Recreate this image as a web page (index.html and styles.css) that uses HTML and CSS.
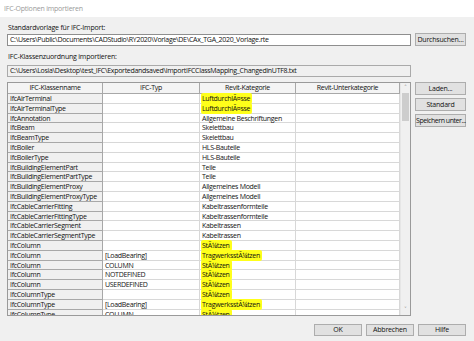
FILE: index.html
```html
<!DOCTYPE html>
<html>
<head>
<meta charset="utf-8">
<link rel="stylesheet" href="styles.css">
</head>
<body>
<div class="titlebar">IFC-Optionen importieren</div>
<div class="content">
  <div class="label l1">Standardvorlage für IFC-Import:</div>
  <div class="inrow">
    <div class="input">C:\Users\Public\Documents\CADStudio\RY2020\Vorlage\DE\CAx_TGA_2020_Vorlage.rte</div>
    <div class="btn side">Durchsuchen...</div>
  </div>
  <div class="label l2">IFC-Klassenzuordnung importieren:</div>
  <div class="inrow">
    <div class="input ro">C:\Users\Losia\Desktop\test_IFC\Exportedandsaved\importIFCClassMapping_ChangedinUTF8.txt</div>
  </div>
  <div class="main">
    <div class="tablebox">
      <div class="grid">
        <div class="hd">IFC-Klassenname</div><div class="hd">IFC-Typ</div><div class="hd">Revit-Kategorie</div><div class="hd">Revit-Unterkategorie</div>
        <div class="c1">IfcAirTerminal</div><div class="c"></div><div class="c"><span class="hl">LuftdurchlÃ¤sse</span></div><div class="c"></div>
        <div class="c1">IfcAirTerminalType</div><div class="c"></div><div class="c"><span class="hl">LuftdurchlÃ¤sse</span></div><div class="c"></div>
        <div class="c1">IfcAnnotation</div><div class="c"></div><div class="c">Allgemeine Beschriftungen</div><div class="c"></div>
        <div class="c1">IfcBeam</div><div class="c"></div><div class="c">Skelettbau</div><div class="c"></div>
        <div class="c1">IfcBeamType</div><div class="c"></div><div class="c">Skelettbau</div><div class="c"></div>
        <div class="c1">IfcBoiler</div><div class="c"></div><div class="c">HLS-Bauteile</div><div class="c"></div>
        <div class="c1">IfcBoilerType</div><div class="c"></div><div class="c">HLS-Bauteile</div><div class="c"></div>
        <div class="c1">IfcBuildingElementPart</div><div class="c"></div><div class="c">Teile</div><div class="c"></div>
        <div class="c1">IfcBuildingElementPartType</div><div class="c"></div><div class="c">Teile</div><div class="c"></div>
        <div class="c1">IfcBuildingElementProxy</div><div class="c"></div><div class="c">Allgemeines Modell</div><div class="c"></div>
        <div class="c1">IfcBuildingElementProxyType</div><div class="c"></div><div class="c">Allgemeines Modell</div><div class="c"></div>
        <div class="c1">IfcCableCarrierFitting</div><div class="c"></div><div class="c">Kabeltrassenformteile</div><div class="c"></div>
        <div class="c1">IfcCableCarrierFittingType</div><div class="c"></div><div class="c">Kabeltrassenformteile</div><div class="c"></div>
        <div class="c1">IfcCableCarrierSegment</div><div class="c"></div><div class="c">Kabeltrassen</div><div class="c"></div>
        <div class="c1">IfcCableCarrierSegmentType</div><div class="c"></div><div class="c">Kabeltrassen</div><div class="c"></div>
        <div class="c1">IfcColumn</div><div class="c"></div><div class="c"><span class="hl">StÃ¼tzen</span></div><div class="c"></div>
        <div class="c1">IfcColumn</div><div class="c">[LoadBearing]</div><div class="c"><span class="hl">TragwerksstÃ¼tzen</span></div><div class="c"></div>
        <div class="c1">IfcColumn</div><div class="c">COLUMN</div><div class="c"><span class="hl">StÃ¼tzen</span></div><div class="c"></div>
        <div class="c1">IfcColumn</div><div class="c">NOTDEFINED</div><div class="c"><span class="hl">StÃ¼tzen</span></div><div class="c"></div>
        <div class="c1">IfcColumn</div><div class="c">USERDEFINED</div><div class="c"><span class="hl">StÃ¼tzen</span></div><div class="c"></div>
        <div class="c1">IfcColumnType</div><div class="c"></div><div class="c"><span class="hl">StÃ¼tzen</span></div><div class="c"></div>
        <div class="c1">IfcColumnType</div><div class="c">[LoadBearing]</div><div class="c"><span class="hl">TragwerksstÃ¼tzen</span></div><div class="c"></div>
        <div class="c1">IfcColumnType</div><div class="c">COLUMN</div><div class="c"><span class="hl">StÃ¼tzen</span></div><div class="c"></div>
      </div>
      <div class="scroll">
        <div class="arrow">&#x2C4;</div>
        <div class="track"><div class="thumb"></div></div>
        <div class="arrow">&#x2C5;</div>
      </div>
    </div>
    <div class="sidebtns">
      <div class="btn side">Laden...</div>
      <div class="btn side">Standard</div>
      <div class="btn side tight">Speichern unter...</div>
    </div>
  </div>
  <div class="footer">
    <div class="btn foot">OK</div>
    <div class="btn foot">Abbrechen</div>
    <div class="btn foot">Hilfe</div>
  </div>
</div>
</body>
</html>
```
FILE: styles.css
```css
* { box-sizing: border-box; }
html, body { margin: 0; padding: 0; }
body {
  width: 474px;
  height: 341px;
  background: #f0f0f0;
  font-family: "Open Sans", "Noto Sans", sans-serif;
  font-size: 7px;
  color: #111;
  overflow: hidden;
}
.titlebar {
  height: 17px;
  background: #fff;
  color: #9a9a9a;
  padding-left: 4px;
  line-height: 17px;
  letter-spacing: -0.2px;
}
.content { padding: 0 8px 0 7px; }
.label { height: 10px; line-height: 10px; padding-left: 1px; letter-spacing: -0.2px; }
.l1 { margin-top: 6px; margin-bottom: 0; }
.l2 { margin-top: 6px; margin-bottom: 2px; }
.inrow { display: flex; gap: 4px; align-items: center; height: 13px; }
.input {
  width: 404px;
  height: 12px;
  line-height: 10px;
  background: #fff;
  border: 1px solid #8e8e8e;
  padding-left: 2px;
  white-space: nowrap;
  overflow: hidden;
  letter-spacing: -0.3px;
}
.input.ro { background: #f0f0f0; border-color: #aaa; }
.btn {
  background: #e1e1e1;
  border: 1px solid #adadad;
  text-align: center;
  white-space: nowrap;
  letter-spacing: -0.2px;
}
.btn.side { width: 51px; height: 13px; line-height: 11px; }
.btn.tight { letter-spacing: -0.45px; }
.main { display: flex; gap: 4px; margin-top: 5px; }
.tablebox {
  width: 404px;
  height: 234px;
  display: flex;
  border: 1px solid #9a9a9a;
  background: #fff;
  overflow: hidden;
}
.grid {
  display: grid;
  grid-template-columns: 95px 97px 96px 104px;
  grid-template-rows: 11px;
  grid-auto-rows: 9.8px;
  align-content: start;
}
.grid > div {
  border-right: 1px solid #d8d8d8;
  border-bottom: 1px solid #d8d8d8;
  white-space: nowrap;
  overflow: visible;
  line-height: 9px;
  padding-left: 2px;
  letter-spacing: -0.3px;
}
.grid > .hd {
  background: #f4f4f4;
  border-color: #a8a8a8;
  text-align: center;
  line-height: 10px;
  padding-left: 0;
}
.grid > .c1 {
  background: #f0f0f0;
  border-color: #a8a8a8;
}
.hl {
  background: #ffff1a;
  border-radius: 2px;
  padding: 1px 2px 1px 1px;
  margin-left: -1px;
}
.scroll {
  width: 10px;
  display: flex;
  flex-direction: column;
  background: #f0f0f0;
  border-left: 1px solid #e6e6e6;
}
.arrow { height: 10px; line-height: 10px; text-align: center; color: #606060; font-size: 7px; }
.track { flex: 1; padding: 0 1px; }
.thumb { height: 28px; background: #cdcdcd; }
.sidebtns { display: flex; flex-direction: column; gap: 3px; }
.footer { display: flex; justify-content: flex-end; gap: 4px; margin-top: 8px; padding-right: 0; }
.btn.foot { width: 48px; height: 12px; line-height: 10px; }
```
